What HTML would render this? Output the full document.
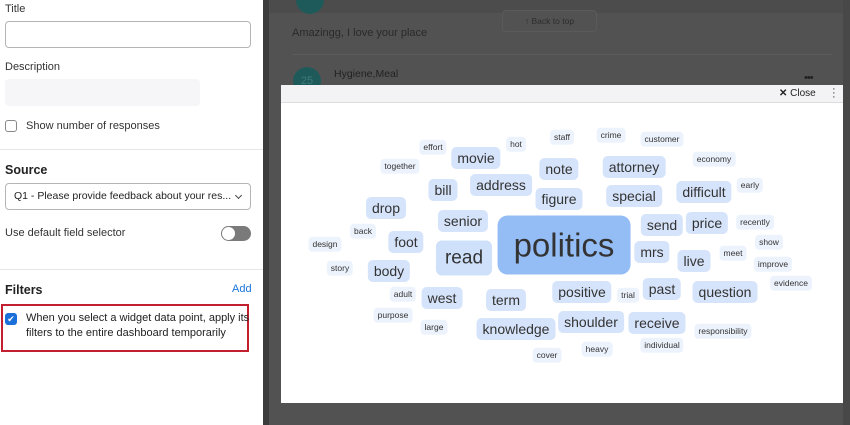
<!DOCTYPE html>
<html><head><meta charset="utf-8"><style>
*{box-sizing:border-box;margin:0;padding:0}
body{width:850px;height:425px;overflow:hidden;font-family:"Liberation Sans",sans-serif;background:#525252;position:relative;color:#222}
.left{position:absolute;left:0;top:0;width:263px;height:425px;background:#fff}
.sb{position:absolute;left:263px;top:0;width:6px;height:425px;background:#3c3c3c}
.a{position:absolute}
.lbl{font-size:11px;color:#333}
.inp{border:1px solid #b5b5b5;border-radius:4px;background:#fff}
.w{position:absolute;transform:translate(-50%,-50%);border-radius:4px;white-space:nowrap;color:#333;line-height:1}
.s{font-size:8.5px;background:#edf3fd;padding:3px 4px}
.m{font-size:14px;background:#d6e4fb;padding:4px 6px;border-radius:5px}
</style></head><body>
<div class="left">
<div class="a lbl" style="left:5px;top:3px">Title</div>
<div class="a inp" style="left:5px;top:21px;width:246px;height:27px"></div>
<div class="a lbl" style="left:5px;top:61px">Description</div>
<div class="a" style="left:5px;top:79px;width:195px;height:27px;background:#f6f6f8;border-radius:4px"></div>
<div class="a" style="left:5px;top:120px;width:12px;height:12px;border:1px solid #888;border-radius:3px"></div>
<div class="a lbl" style="left:26px;top:120px">Show number of responses</div>
<div class="a" style="left:0;top:149px;width:263px;height:1px;background:#e6e6e6"></div>
<div class="a" style="left:5px;top:163px;font-size:12.5px;font-weight:bold">Source</div>
<div class="a inp" style="left:5px;top:183px;width:246px;height:27px"></div>
<div class="a" style="left:14px;top:190px;color:#222;font-size:10.5px;white-space:nowrap">Q1 - Please provide feedback about your res...</div>
<div class="a" style="left:236px;top:193px;width:5px;height:5px;border-right:1px solid #444;border-bottom:1px solid #444;transform:rotate(45deg)"></div>
<div class="a lbl" style="left:5px;top:227px">Use default field selector</div>
<div class="a" style="left:221px;top:226px;width:30px;height:15px;border-radius:8px;background:#7a7a7a"></div>
<div class="a" style="left:222px;top:227px;width:13px;height:13px;border-radius:50%;background:#fff"></div>
<div class="a" style="left:0;top:269px;width:263px;height:1px;background:#e6e6e6"></div>
<div class="a" style="left:5px;top:283px;font-size:12.5px;font-weight:bold">Filters</div>
<div class="a" style="left:232px;top:283px;font-size:11px;color:#1a73d9">Add</div>
<div class="a" style="left:1px;top:304px;width:248px;height:48px;border:2px solid #c2202f"></div>
<div class="a" style="left:5px;top:313px;width:12px;height:12px;background:#1a6fd8;border-radius:3px;color:#fff;font-size:9px;line-height:12px;text-align:center">✔</div>
<div class="a lbl" style="left:26px;top:311px;line-height:15px;color:#222;width:225px">When you select a widget data point, apply its filters to the entire dashboard temporarily</div>
</div>
<div class="sb"></div>
<div class="a" style="left:269px;top:0;width:581px;height:13px;background:#4c4c4c"></div>
<div class="a" style="left:843px;top:0;width:7px;height:425px;background:#484848"></div>
<div class="a" style="left:296px;top:0;width:28px;height:14px;border-radius:0 0 14px 14px;background:#1f5a5a"></div>
<div class="a" style="left:502px;top:10px;width:95px;height:22px;border:1px solid #5a5a5a;border-radius:4px;font-size:8.5px;color:#2c2c2c;text-align:center;line-height:20px;background:#525252">↑ Back to top</div>
<div class="a" style="left:292px;top:27px;font-size:11px;color:#2a2a2a">Amazingg, I love your place</div>
<div class="a" style="left:292px;top:54px;width:540px;height:1px;background:#5c5c5c"></div>
<div class="a" style="left:293px;top:67px;width:28px;height:28px;border-radius:50%;background:#1f5a5a;color:#3c7a7a;font-size:11px;text-align:center;line-height:28px">25</div>
<div class="a" style="left:334px;top:68px;font-size:10.5px;color:#222">Hygiene,Meal</div>
<div class="a" style="left:804px;top:72px;font-size:11px;color:#222;letter-spacing:-1px">•••</div>
<div class="a" style="left:281px;top:85px;width:562px;height:318px;background:#fff"></div>
<div class="a" style="left:281px;top:85px;width:562px;height:18px;background:#f3f3f6;border-bottom:1px solid #ddd"></div>
<div class="a" style="left:779px;top:88px;font-size:10px;color:#222"><b>✕</b> Close</div>
<div class="a" style="left:832px;top:87px;font-size:11px;line-height:4px;color:#333">·<br>·<br>·</div>
<div style="position:absolute;left:0;top:0;width:850px;height:425px">
<span class="w s" style="left:433px;top:147px">effort</span>
<span class="w s" style="left:516px;top:144px">hot</span>
<span class="w s" style="left:562px;top:137px">staff</span>
<span class="w s" style="left:611px;top:135px">crime</span>
<span class="w s" style="left:662px;top:139px">customer</span>
<span class="w s" style="left:400px;top:166px">together</span>
<span class="w s" style="left:714px;top:159px">economy</span>
<span class="w s" style="left:750px;top:185px">early</span>
<span class="w s" style="left:363px;top:231px">back</span>
<span class="w s" style="left:325px;top:244px">design</span>
<span class="w s" style="left:340px;top:268px">story</span>
<span class="w s" style="left:755px;top:222px">recently</span>
<span class="w s" style="left:769px;top:242px">show</span>
<span class="w s" style="left:733px;top:253px">meet</span>
<span class="w s" style="left:773px;top:264px">improve</span>
<span class="w s" style="left:791px;top:283px">evidence</span>
<span class="w s" style="left:403px;top:294px">adult</span>
<span class="w s" style="left:628px;top:295px">trial</span>
<span class="w s" style="left:393px;top:315px">purpose</span>
<span class="w s" style="left:434px;top:327px">large</span>
<span class="w s" style="left:723px;top:331px">responsibility</span>
<span class="w s" style="left:662px;top:345px">individual</span>
<span class="w s" style="left:547px;top:355px">cover</span>
<span class="w s" style="left:597px;top:349px">heavy</span>
<span class="w m" style="left:476px;top:158px">movie</span>
<span class="w m" style="left:559px;top:169px">note</span>
<span class="w m" style="left:634px;top:167px">attorney</span>
<span class="w m" style="left:443px;top:190px">bill</span>
<span class="w m" style="left:501px;top:185px">address</span>
<span class="w m" style="left:559px;top:199px">figure</span>
<span class="w m" style="left:634px;top:196px">special</span>
<span class="w m" style="left:704px;top:192px">difficult</span>
<span class="w m" style="left:386px;top:208px">drop</span>
<span class="w m" style="left:463px;top:221px">senior</span>
<span class="w m" style="left:662px;top:225px">send</span>
<span class="w m" style="left:707px;top:223px">price</span>
<span class="w m" style="left:406px;top:242px">foot</span>
<span class="w m" style="left:652px;top:252px">mrs</span>
<span class="w m" style="left:694px;top:261px">live</span>
<span class="w m" style="left:389px;top:271px">body</span>
<span class="w m" style="left:442px;top:298px">west</span>
<span class="w m" style="left:506px;top:300px">term</span>
<span class="w m" style="left:582px;top:292px">positive</span>
<span class="w m" style="left:662px;top:289px">past</span>
<span class="w m" style="left:725px;top:292px">question</span>
<span class="w m" style="left:516px;top:329px">knowledge</span>
<span class="w m" style="left:591px;top:322px">shoulder</span>
<span class="w m" style="left:657px;top:323px">receive</span>
<span class="w" style="left:464px;top:258px;font-size:19px;background:#cfe0fb;padding:8px 9px;border-radius:6px">read</span>
<span class="w" style="left:564px;top:245px;font-size:33px;background:#94bdf6;padding:13px 16px;border-radius:10px">politics</span>
</div>
</body></html>
